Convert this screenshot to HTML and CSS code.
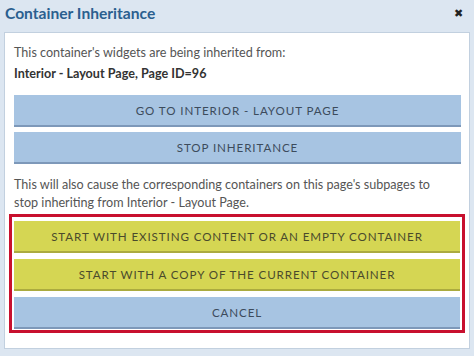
FILE: index.html
```html
<!DOCTYPE html>
<html>
<head>
  <meta charset=utf-8>
  <title>Container Inheritance</title>
  <link rel="stylesheet" href="styles.css">
</head>
<body>

<div class=dialog>
  <div class=header>
    <span class=title>Container Inheritance</span>
    <span class=close>&#x2716;</span>
  </div>
  <div class=panel>
    <p class=note>This container's widgets are being inherited from:</p>
    <p class=source>Interior - Layout Page, Page ID=96</p>
    <button class='btn blue'>Go to Interior - Layout Page</button>
    <button class='btn blue'>Stop Inheritance</button>
    <p class='note warn'>This will also cause the corresponding containers on this page's subpages to stop inheriting from Interior - Layout Page.</p>
    <div class=choices>
      <button class='btn yellow'>Start with existing content or an empty container</button>
      <button class='btn yellow'>Start with a copy of the current container</button>
      <button class='btn blue'>Cancel</button>
    </div>
  </div>
</div>

</body>
</html>
```

FILE: styles.css
```css
* {
  box-sizing: border-box;
  }
html, body {
  margin: 0;
  width: 100%;
  height: 100%;
  }
body {
  background: #dce6f1;
  font: normal 12.6px "Lato", "Noto Sans", sans-serif;
  color: #555;
  }
.dialog {
  padding: 0 4px 6px;
  }
.header {
  display: flex;
  align-items: center;
  justify-content: space-between;
  height: 32px;
  padding: 0 7px 7px 1px;
  }
.title {
  font: bold 15.6px "Lato", sans-serif;
  color: #2b5f8f;
  }
.close {
  font-size: 11px;
  color: #222;
  }
.panel {
  background: #fff;
  border: 1px solid #c2d0df;
  padding: 10px 8px 15px 9px;
  }
.note {
  margin: 0;
  line-height: 19px;
  }
.source {
  margin: 2px 0 11px;
  line-height: 20px;
  font-weight: bold;
  color: #333;
  }
.warn {
  margin: 12px 0 2px;
  padding-right: 20px;
  line-height: 18px;
  }
.btn {
  display: block;
  width: 100%;
  height: 32px;
  margin: 0 0 5px;
  padding: 0;
  border: 0;
  border-bottom: 2px solid #7d98b9;
  background: #a7c4e2;
  color: #3c4b5c;
  font: normal 11.6px "Lato", sans-serif;
  letter-spacing: 0.9px;
  text-transform: uppercase;
  cursor: pointer;
  }
.btn.yellow {
  background: #d5d653;
  border-bottom-color: #abab3f;
  color: #4a4a2c;
  margin-bottom: 6px;
  }
.choices {
  margin: 0 -4px 0 -5px;
  border: 3px solid #c8102e;
  padding: 4px 2px 1px;
  }
.choices .btn:last-child {
  margin-bottom: 0;
  }
```
